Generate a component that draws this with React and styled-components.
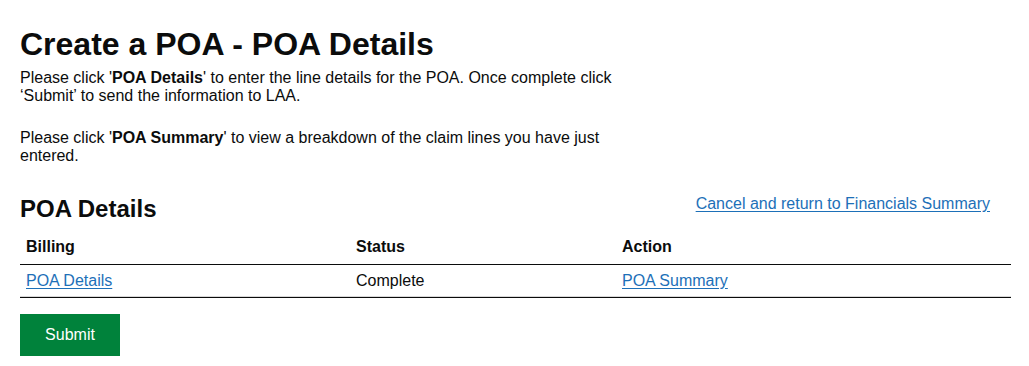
import React from "react"
import styled, { createGlobalStyle } from "styled-components"

const GlobalStyle = createGlobalStyle`
  *, *::before, *::after {
    box-sizing: border-box;
  }
  html, body {
    margin: 0;
    padding: 0;
    background: #ffffff;
  }
  body {
    font-family: "Liberation Sans", Arial, sans-serif;
    color: #0b0c0c;
  }
`

const Page = styled.main`
  padding: 26px 18px 0 20px;
  width: 1029px;
`

const Title = styled.h1`
  margin: 0;
  font-size: 32px;
  line-height: 37px;
  font-weight: 700;
`

const Intro = styled.p`
  margin: ${({ $first }) => ($first ? "6px" : "24px")} 0 0;
  font-size: 16px;
  line-height: 18px;
  max-width: 600px;

  strong {
    font-weight: 700;
  }
`

const SectionHeader = styled.div`
  display: flex;
  justify-content: space-between;
  align-items: flex-start;
  margin-top: 30px;
`

const SectionTitle = styled.h2`
  margin: 0;
  font-size: 24px;
  line-height: 28px;
  font-weight: 700;
`

const Link = styled.a`
  color: #1d70b8;
  text-decoration: underline;
  text-underline-offset: 2px;
  font-size: 16px;
  line-height: 18px;
`

const CancelLink = styled(Link)`
  margin-right: 21px;
`

const TableWrap = styled.div`
  margin-top: 8px;
  border-bottom: 1px solid #0b0c0c;
`

const Table = styled.table`
  width: 100%;
  border-collapse: collapse;
  table-layout: fixed;
`

const HeadCell = styled.th`
  width: ${({ $width }) => $width};
  padding: 7px 6px 8px;
  text-align: left;
  font-size: 16px;
  line-height: 18px;
  font-weight: 700;
  border-bottom: 1px solid #0b0c0c;
`

const Cell = styled.td`
  padding: 7px 6px 6px;
  font-size: 16px;
  line-height: 18px;
  border-bottom: 1px solid #d8d8d8;
`

const SubmitButton = styled.button`
  display: block;
  margin-top: 16px;
  width: 100px;
  height: 42px;
  border: 0;
  border-radius: 0;
  background: #00823b;
  color: #ffffff;
  font-family: "Liberation Sans", Arial, sans-serif;
  font-size: 16px;
  cursor: pointer;
`

const rows = [
  { billing: "POA Details", status: "Complete", action: "POA Summary" },
]

export default function App() {
  return (
    <>
      <GlobalStyle />
      <Page>
        <Title>Create a POA - POA Details</Title>
        <Intro $first>
          Please click '<strong>POA Details</strong>' to enter the line details
          for the POA. Once complete click ‘Submit’ to send the information to
          LAA.
        </Intro>
        <Intro>
          Please click '<strong>POA Summary</strong>' to view a breakdown of the
          claim lines you have just entered.
        </Intro>

        <SectionHeader>
          <SectionTitle>POA Details</SectionTitle>
          <CancelLink href="#">Cancel and return to Financials Summary</CancelLink>
        </SectionHeader>

        <TableWrap>
          <Table>
            <thead>
              <tr>
                <HeadCell $width="330px">Billing</HeadCell>
                <HeadCell $width="266px">Status</HeadCell>
                <HeadCell $width="395px">Action</HeadCell>
              </tr>
            </thead>
            <tbody>
              {rows.map((row, i) => (
                <tr key={i}>
                  <Cell>
                    <Link href="#">{row.billing}</Link>
                  </Cell>
                  <Cell>{row.status}</Cell>
                  <Cell>
                    <Link href="#">{row.action}</Link>
                  </Cell>
                </tr>
              ))}
            </tbody>
          </Table>
        </TableWrap>

        <SubmitButton type="button">Submit</SubmitButton>
      </Page>
    </>
  )
}
